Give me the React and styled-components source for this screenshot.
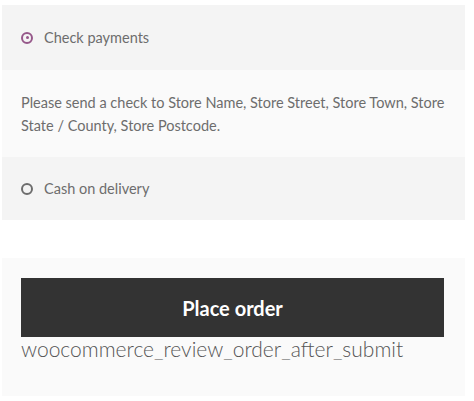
import React from "react"
import styled, { createGlobalStyle } from "styled-components"

const Global = createGlobalStyle`
  body {
    margin: 0;
    background: #fff;
    font-family: Lato, "Open Sans", sans-serif;
  }
`

const Page = styled.div`
  width: 463px;
  padding: 5px 0 0 2px;
`

const Methods = styled.ul`
  list-style: none;
  margin: 0;
  padding: 0;
  background: #f4f4f4;
`

const Method = styled.li`
  display: flex;
  align-items: center;
  height: ${p => p.$h}px;
  padding-left: 19px;
  font-size: 14.5px;
  color: #6d6d6d;
`

const Radio = styled.span`
  box-sizing: border-box;
  width: 12px;
  height: 12px;
  border-radius: 50%;
  border: 2.5px solid ${p => (p.$checked ? "#96588a" : "#6d6d6d")};
  margin-right: 11px;
  display: flex;
  align-items: center;
  justify-content: center;

  &::after {
    content: "";
    display: ${p => (p.$checked ? "block" : "none")};
    width: 3px;
    height: 3px;
    border-radius: 50%;
    background: #96588a;
  }
`

const Description = styled.div`
  background: #fafafa;
  padding: 21px 10px 20px 19px;
  font-size: 14.5px;
  line-height: 23px;
  color: #6d6d6d;
`

const Submit = styled.div`
  margin-top: 38px;
  background: #fafafa;
  height: 138px;
  padding: 20px 19px 0;
  box-sizing: border-box;
`

const PlaceOrder = styled.button`
  display: block;
  width: 423px;
  height: 59px;
  border: none;
  background: #333;
  color: #fff;
  font-family: inherit;
  font-size: 20px;
  font-weight: 700;
`

const Hook = styled.div`
  font-size: 21px;
  font-weight: 300;
  color: #555;
  line-height: 24px;
`

export default function App() {
  return (
    <Page>
      <Global />
      <Methods>
        <Method $h={65}>
          <Radio $checked />
          Check payments
        </Method>
        <Description>
          Please send a check to Store Name, Store Street, Store Town, Store State / County, Store Postcode.
        </Description>
        <Method $h={63}>
          <Radio />
          Cash on delivery
        </Method>
      </Methods>
      <Submit>
        <PlaceOrder>Place order</PlaceOrder>
        <Hook>woocommerce_review_order_after_submit</Hook>
      </Submit>
    </Page>
  )
}
